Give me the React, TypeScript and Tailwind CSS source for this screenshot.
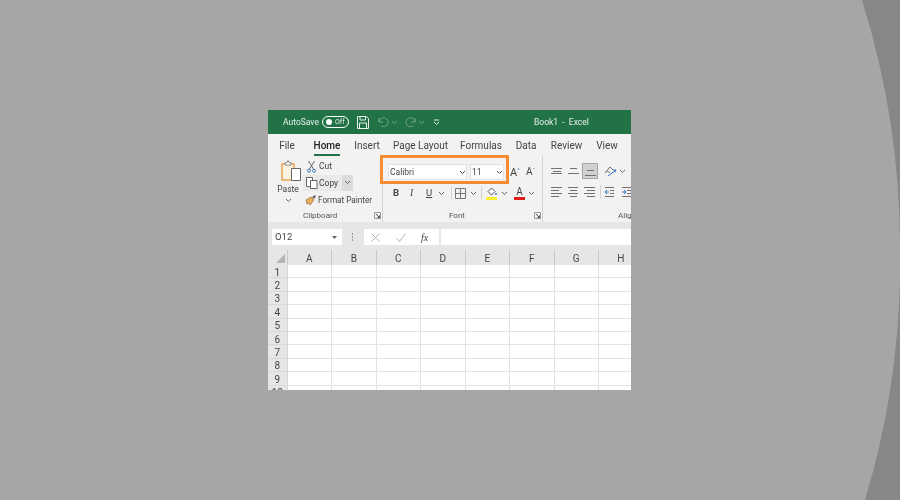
const font = { fontFamily: 'Roboto, "Open Sans", sans-serif' };

function Chev({ className = "", color = "#666" }: { className?: string; color?: string }) {
  return (
    <svg width="7" height="5" viewBox="0 0 7 5" className={`shrink-0 ${className}`}>
      <path d="M1 1l2.5 2.5L6 1" fill="none" stroke={color} strokeWidth="1" />
    </svg>
  );
}

function Lines({ widths, w = 11, h = 10, align = "l" }: { widths: number[]; w?: number; h?: number; align?: "l" | "c" | "r" }) {
  const pos = align === "c" ? "items-center" : align === "r" ? "items-end" : "items-start";
  return (
    <div className={`flex shrink-0 flex-col justify-between ${pos}`} style={{ width: w, height: h }}>
      {widths.map((x, i) => (
        <div key={i} className="h-px bg-[#707070]" style={{ width: x }} />
      ))}
    </div>
  );
}

function Launcher() {
  return (
    <svg width="7" height="7" viewBox="0 0 7 7">
      <path d="M.5 6.5v-6h6v6z" fill="none" stroke="#999" />
      <path d="M2 2l3.5 3.5M5.5 3.5v2h-2" fill="none" stroke="#555" />
    </svg>
  );
}

function Clipboard() {
  return (
    <div className="relative flex h-[66px] w-[115px] shrink-0 border-r border-[#d4d3d2]">
      <div className="ml-[10px] flex w-[20px] flex-col items-center pt-[4px]">
        <svg width="20" height="21" viewBox="0 0 20 21" className="ml-[6px] shrink-0">
          <path d="M1 4h12v16H1z" fill="#fdf3e3" stroke="#e6a550" strokeWidth="1.5" />
          <path d="M4 5V2.500h2l1-2 1 2h2V5z" fill="#fff" stroke="#888" />
          <path d="M10.500 8.500h9v12h-9z" fill="#fff" stroke="#666" />
        </svg>
        <span className="mt-[2px] text-[8.5px] leading-[12px] text-[#444]">Paste</span>
        <Chev className="mt-[3px]" />
      </div>
      <div className="ml-[5px] flex flex-col pt-[2px] text-[8.5px] leading-[12px] text-[#444]">
        <div className="flex h-[16px] items-center pl-[4px]">
          <svg width="9" height="13" viewBox="0 0 9 13" className="shrink-0">
            <path d="M1.500 1l5 8M7.500 1l-5 8" stroke="#666" fill="none" />
            <circle cx="2" cy="10.700" r="1.500" fill="none" stroke="#3a7cc4" />
            <circle cx="7" cy="10.700" r="1.500" fill="none" stroke="#3a7cc4" />
          </svg>
          <span className="ml-[3px]">Cut</span>
        </div>
        <div className="flex h-[17px] items-center">
          <div className="flex h-[16px] w-[39px] items-center bg-[#eae9e8] pl-[3px]">
            <svg width="12" height="12" viewBox="0 0 12 12" className="shrink-0">
              <path d="M.5.5h6v9h-6z" fill="#fff" stroke="#666" />
              <path d="M4.500 3.500h6.500v8H4.500z" fill="#fff" stroke="#666" />
            </svg>
            <span className="ml-[1px]">Copy</span>
          </div>
          <div className="flex h-[16px] w-[11px] items-center justify-center bg-[#dcdbda]">
            <Chev />
          </div>
        </div>
        <div className="flex h-[17px] items-center pl-[2px]">
          <svg width="12" height="12" viewBox="0 0 12 12" className="shrink-0">
            <path d="M1 6l5-3 3 3-4 5-1-2-2 1z" fill="#eeb25c" stroke="#8a6a3a" strokeWidth=".7" />
            <path d="M7 3l3-2 1 1-2 3z" fill="#666" />
          </svg>
          <span className="ml-[1px] whitespace-nowrap text-[8.2px]">Format Painter</span>
        </div>
      </div>
      <span className="absolute bottom-[1px] left-[35px] text-[8px] leading-[10px] text-[#555]">Clipboard</span>
      <div className="absolute bottom-[3px] right-[1px]">
        <Launcher />
      </div>
    </div>
  );
}

function FontGroup() {
  return (
    <div className="relative flex h-[66px] w-[160px] shrink-0 flex-col border-r border-[#d4d3d2] pl-[5px] text-[#444]">
      <div className="mt-[8px] flex h-[16px] items-center">
        <div className="flex h-[16px] w-[79px] items-center justify-between border border-[#e2e1e0] bg-white pl-[1px] text-[8.5px]">
          <span>Calibri</span>
          <Chev color="#444" />
        </div>
        <div className="ml-[3px] flex h-[16px] w-[34px] items-center justify-between border border-[#e2e1e0] bg-white pl-[1px] text-[8.5px]">
          <span>11</span>
          <Chev color="#444" />
        </div>
        <span className="ml-[6px] flex w-[16px] items-start text-[11px] leading-none">
          A<span className="text-[6px] leading-none text-[#3a7cc4]">^</span>
        </span>
        <span className="flex items-start text-[10px] leading-none">
          A<span className="text-[6px] leading-none text-[#3a7cc4]">ˇ</span>
        </span>
      </div>
      <div className="mt-[4px] flex h-[18px] items-center text-[9.5px]">
        <span className="ml-[5px] w-[17px] font-bold">B</span>
        <span className="w-[16px] italic" style={{ fontFamily: "Liberation Serif, serif" }}>I</span>
        <span className="w-[11px] underline">U</span>
        <Chev className="ml-[1px]" />
        <div className="ml-[6px] h-[14px] w-px bg-[#d4d3d2]" />
        <svg width="11" height="11" viewBox="0 0 11 11" className="ml-[3px] shrink-0">
          <path d="M.5.5h10v10H.5zM5.500.5v10M.5 5.500h10" fill="none" stroke="#777" />
        </svg>
        <Chev className="ml-[4px]" />
        <div className="ml-[4px] h-[14px] w-px bg-[#d4d3d2]" />
        <div className="ml-[4px] flex w-[11px] flex-col items-center">
          <svg width="10" height="9" viewBox="0 0 10 9" className="shrink-0">
            <path d="M4.500 1L8 4.500 4.500 8 1 4.500z" fill="#fff" stroke="#555" />
            <circle cx="9" cy="7" r="1" fill="#3a7cc4" />
          </svg>
          <div className="mt-[1px] h-[3px] w-[11px] shrink-0 bg-[#fdf02f]" />
        </div>
        <Chev className="ml-[4px]" />
        <div className="ml-[6px] flex w-[11px] flex-col items-center">
          <span className="text-[10px] leading-[10px]">A</span>
          <div className="h-[3px] w-[11px] shrink-0 bg-[#e21b1b]" />
        </div>
        <Chev className="ml-[3px]" />
      </div>
      <span className="absolute bottom-[1px] left-[66px] text-[8px] leading-[10px] text-[#555]">Font</span>
      <div className="absolute bottom-[3px] right-[1px]">
        <Launcher />
      </div>
    </div>
  );
}

function AlignGroup() {
  return (
    <div className="relative flex h-[66px] w-[88px] shrink-0 flex-col overflow-hidden pl-[8px]">
      <div className="mt-[7px] flex h-[16px] items-center">
        <Lines widths={[11, 8, 11]} h={6} align="c" />
        <div className="ml-[6px]"><Lines widths={[7, 11]} w={11} h={6} align="c" /></div>
        <div className="ml-[3px] flex h-[16px] w-[16px] shrink-0 items-end justify-center border border-[#a5a5a5] bg-[#d2d1d0] pb-[2px]">
          <Lines widths={[7, 11]} h={6} align="c" />
        </div>
        <svg width="13" height="12" viewBox="0 0 13 12" className="ml-[6px] shrink-0">
          <path d="M1 8L6 2l3 3M3 6l3 2" fill="none" stroke="#707070" />
          <path d="M4 11l8-6M12 5l-3 0M12 5l-1 2" stroke="#2f78c4" fill="none" />
        </svg>
        <Chev className="ml-[2px]" />
      </div>
      <div className="mt-[8px] flex h-[10px] items-center">
        <Lines widths={[11, 8, 11, 8]} />
        <div className="ml-[6px]"><Lines widths={[10, 7, 10, 7]} w={10} align="c" /></div>
        <div className="ml-[6px]"><Lines widths={[11, 8, 11, 8]} align="r" /></div>
        <div className="ml-[5px] h-[14px] w-px shrink-0 bg-[#d4d3d2]" />
        <svg width="9" height="10" viewBox="0 0 9 10" className="ml-[4px] shrink-0">
          <path d="M0 .5h9M5 3.500h4M5 6.500h4M0 9.500h9" stroke="#707070" fill="none" />
          <path d="M0 5h4M2 3L0 5l2 2" stroke="#2f78c4" fill="none" />
        </svg>
        <svg width="9" height="10" viewBox="0 0 9 10" className="ml-[8px] shrink-0">
          <path d="M0 .5h9M5 3.500h4M5 6.500h4M0 9.500h9" stroke="#707070" fill="none" />
          <path d="M0 5h4M2 3l2 2-2 2" stroke="#2f78c4" fill="none" />
        </svg>
      </div>
      <span className="absolute bottom-[1px] left-[75px] whitespace-nowrap text-[8px] leading-[10px] text-[#555]">Alignment</span>
    </div>
  );
}

function FormulaBar() {
  return (
    <div className="flex h-[28px] items-start bg-[#e6e6e6] pl-[4px] pt-[7px]">
      <div className="flex h-[16px] w-[70px] items-center justify-between bg-white pl-[3px] pr-[5px] pt-[1px] text-[9.5px] text-[#444]">
        <span>O12</span>
        <svg width="5" height="3" viewBox="0 0 5 3"><path d="M0 0h5L2.500 3z" fill="#666" /></svg>
      </div>
      <div className="ml-[9px] flex h-[16px] w-[3px] flex-col items-center justify-center gap-[1px]">
        <div className="h-[2px] w-px bg-[#999]" />
        <div className="h-[2px] w-px bg-[#999]" />
        <div className="h-[2px] w-px bg-[#999]" />
      </div>
      <div className="ml-[10px] flex h-[16px] w-[75px] items-center bg-white pl-[7px]">
        <svg width="9" height="9" viewBox="0 0 9 9" className="shrink-0"><path d="M.5.5l8 8M8.500.5l-8 8" stroke="#b5b5b5" fill="none" /></svg>
        <svg width="10" height="9" viewBox="0 0 10 9" className="ml-[16px] shrink-0"><path d="M.5 5l3 3.500 6-8" stroke="#b5b5b5" fill="none" /></svg>
        <span className="ml-[15px] text-[10px] italic text-[#444]" style={{ fontFamily: "Liberation Serif, serif" }}>fx</span>
      </div>
      <div className="ml-[2px] h-[16px] flex-1 bg-white" />
    </div>
  );
}

const cols = ["A", "B", "C", "D", "E", "F", "G", "H"];
const rows = ["1", "2", "3", "4", "5", "6", "7", "8", "9", "10"];

function Sheet() {
  return (
    <div className="overflow-hidden bg-white">
      <div className="flex h-[15px] bg-[#e6e6e6]">
        <div className="flex w-[19.500px] shrink-0 items-end justify-end border-r border-[#c8c8c8] p-[2px]">
          <svg width="9" height="9" viewBox="0 0 9 9"><path d="M9 0v9H0z" fill="#b4b4b4" /></svg>
        </div>
        {cols.map((c) => (
          <div key={c} className="flex w-[44.500px] shrink-0 items-center justify-center border-r border-[#c8c8c8] pt-[3px] text-[10px] leading-none text-[#444]">
            {c}
          </div>
        ))}
      </div>
      {rows.map((r) => (
        <div key={r} className="flex h-[13.400px]">
          <div className="flex w-[19.500px] shrink-0 items-center justify-center border-b border-r border-[#d8d8d8] bg-[#e6e6e6] pt-[3px] text-[10px] leading-none text-[#444]">
            {r}
          </div>
          {cols.map((c) => (
            <div key={c} className="w-[44.500px] shrink-0 border-b border-r border-[#e2e2e2]" />
          ))}
        </div>
      ))}
    </div>
  );
}

const tabs: [string, number][] = [
  ["File", 38],
  ["Home", 42],
  ["Insert", 38],
  ["Page Layout", 69],
  ["Formulas", 52],
  ["Data", 38],
  ["Review", 43],
  ["View", 38],
];

export default function App() {
  return (
    <div className="relative h-[500px] w-[900px] overflow-hidden bg-[#a6a6a6] pl-[268px] pt-[110px]" style={font}>
      <svg width="900" height="500" viewBox="0 0 900 500" className="absolute left-0 top-0">
        <path d="M862 0A828 828 0 0 1 900 245A828 828 0 0 1 865 500H900V0z" fill="#878787" />
      </svg>
      <div className="relative h-[280px] w-[363px] overflow-hidden bg-[#f3f2f1] blur-[0.3px]">
        <div className="flex h-[24px] items-center bg-[#217346] pl-[15px] text-[8.5px] text-[#e8f1ec]">
          <span className="w-[35px] whitespace-nowrap">AutoSave</span>
          <div className="ml-[4px] flex h-[12px] w-[27px] shrink-0 items-center gap-[3px] rounded-full border border-white pl-[3px]">
            <div className="h-[6px] w-[6px] rounded-full bg-white" />
            <span className="text-[7px] leading-none">Off</span>
          </div>
          <svg width="12" height="13" viewBox="0 0 12 13" className="ml-[8px] shrink-0">
            <path d="M.5.5h9l2 2v10H.5zM3 .5v3.500h5.500V.5M2.500 12.500V7h7v5.500" fill="none" stroke="#e8f1ec" />
          </svg>
          <svg width="11" height="10" viewBox="0 0 11 10" className="ml-[9px] shrink-0">
            <path d="M1 1v4h4M1 5a4.500 4.500 0 1 1 2 4" fill="none" stroke="#6fa388" />
          </svg>
          <Chev className="ml-[2px]" color="#6fa388" />
          <svg width="11" height="10" viewBox="0 0 11 10" className="ml-[7px] shrink-0">
            <path d="M10 1v4H6M10 5a4.500 4.500 0 1 0-2 4" fill="none" stroke="#6fa388" />
          </svg>
          <Chev className="ml-[2px]" color="#6fa388" />
          <svg width="7" height="7" viewBox="0 0 7 7" className="ml-[8px] shrink-0">
            <path d="M1 1h5M1 3l2.500 2.500L6 3" fill="none" stroke="#e8f1ec" />
          </svg>
          <span className="ml-[94px] whitespace-nowrap text-[8.5px]">Book1&nbsp; -&nbsp; Excel</span>
        </div>
        <div className="flex h-[22px] text-[10px] text-[#444]">
          {tabs.map(([t, w]) => (
            <div key={t} style={{ width: w }} className="flex shrink-0 items-center justify-center whitespace-nowrap">
              <div className="relative">
                <span className={t === "Home" ? "font-medium text-[#222]" : ""}>{t}</span>
                {t === "Home" && <div className="absolute -bottom-[3px] left-0 h-[2px] w-full bg-[#217346]" />}
              </div>
            </div>
          ))}
        </div>
        <div className="flex h-[66px]">
          <Clipboard />
          <FontGroup />
          <AlignGroup />
        </div>
        <FormulaBar />
        <Sheet />
        <div className="absolute left-[112px] top-[45px] h-[29px] w-[129px] border-[3px] border-[#f58b33]" />
      </div>
    </div>
  );
}
